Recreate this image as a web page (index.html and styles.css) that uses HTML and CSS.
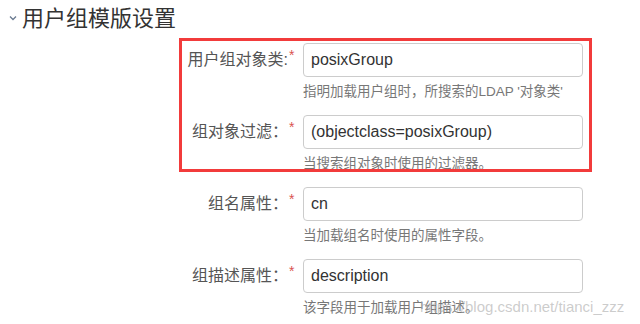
FILE: index.html
```html
<!DOCTYPE html>
<html lang="zh-CN">
<head>
  <meta charset="UTF-8">
  <title>用户组模版设置</title>
  <link rel="stylesheet" href="styles.css">
</head>
<body>

  <div class="section-title">
    <svg class="chevron" width="8" height="6" viewBox="0 0 8 6">
      <polyline points="1,1.5 4,4.5 7,1.5" fill="none" stroke="#6a7a90" stroke-width="1.3"/>
    </svg>
    <h2>用户组模版设置</h2>
  </div>

  <div class="form">

    <div class="form-row">
      <label class="label">用户组对象类:</label>
      <span class="req">*</span>
      <div class="field">
        <input type="text" value="posixGroup">
        <div class="help">指明加载用户组时，所搜索的LDAP '对象类'</div>
      </div>
    </div>

    <div class="form-row">
      <label class="label">组对象过滤：</label>
      <span class="req">*</span>
      <div class="field">
        <input type="text" value="(objectclass=posixGroup)">
        <div class="help">当搜索组对象时使用的过滤器。</div>
      </div>
    </div>

    <div class="form-row">
      <label class="label">组名属性：</label>
      <span class="req">*</span>
      <div class="field">
        <input type="text" value="cn">
        <div class="help">当加载组名时使用的属性字段。</div>
      </div>
    </div>

    <div class="form-row">
      <label class="label">组描述属性：</label>
      <span class="req">*</span>
      <div class="field">
        <input type="text" value="description">
        <div class="help">该字段用于加载用户组描述。</div>
      </div>
    </div>

  </div>

  <!-- annotation overlay -->
  <div class="highlight"></div>
  <div class="watermark">https://blog.csdn.net/tianci_zzz</div>

</body>
</html>
```

FILE: styles.css
```css
body {
  font-family: "Liberation Sans", "Noto Sans CJK SC", sans-serif;
  background: #fff;
  margin: 0;
  position: relative;
  width: 640px;
  height: 324px;
  overflow: hidden;
}

.section-title {
  display: flex;
  align-items: center;
  height: 38px;
  padding-left: 9px;
}

.chevron {
  margin-right: 5px;
  margin-top: -3px;
}

.section-title h2 {
  margin: 0;
  font-size: 22px;
  font-weight: normal;
  color: #333;
  line-height: 38px;
}

.form {
  padding-top: 5px;
}

.form-row {
  display: flex;
  margin-bottom: 14px;
}

.label {
  width: 288px;
  text-align: right;
  font-size: 16px;
  line-height: 34px;
  color: #555;
  white-space: nowrap;
}

.req {
  width: 15px;
  color: #d9534f;
  font-size: 14px;
  line-height: 14px;
  padding-top: 5px;
  padding-left: 1px;
  box-sizing: border-box;
}

.field input {
  display: block;
  box-sizing: border-box;
  width: 280px;
  height: 34px;
  padding: 0 7px;
  border: 1px solid #ccc;
  border-radius: 4px;
  font-family: inherit;
  font-size: 16px;
  color: #333;
  outline: none;
}

.help {
  margin-top: 6px;
  font-size: 13.5px;
  line-height: 18px;
  color: #777;
}

.highlight {
  position: absolute;
  left: 179px;
  top: 38px;
  width: 407px;
  height: 128px;
  border: 3px solid #f23b3b;
}

.watermark {
  position: absolute;
  left: 420px;
  top: 298px;
  font-size: 15px;
  color: rgba(170, 170, 170, 0.6);
}
```
